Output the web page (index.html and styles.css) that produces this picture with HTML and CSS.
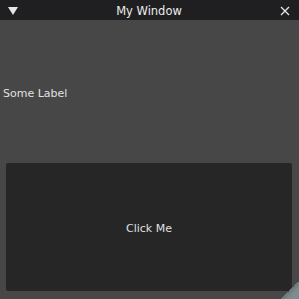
FILE: index.html
```html
<!DOCTYPE html>
<html lang="en">
<head>
    <meta charset="UTF-8">
    <title>My Window</title>
    <link rel="stylesheet" href="styles.css">
</head>
<body>
    <div class="window">
        <div class="titlebar">
            <svg class="collapse" width="10" height="8" viewBox="0 0 10 8">
                <polygon points="0,0 10,0 5,8" fill="#e6e6e6"/>
            </svg>
            <span class="title">My Window</span>
            <svg class="close" width="10" height="10" viewBox="0 0 10 10">
                <path d="M1 1 L9 9 M9 1 L1 9" stroke="#e6e6e6" stroke-width="1.3"/>
            </svg>
        </div>
        <div class="content">
            <div class="label-row">
                <span class="label">Some Label</span>
            </div>
            <button class="button">Click Me</button>
        </div>
        <div class="grip"></div>
    </div>
</body>
</html>
```
FILE: styles.css
```css
body {
    margin: 0;
    padding: 0;
    background-color: #474747;
    font-family: "DejaVu Sans", sans-serif;
    font-size: 11px;
    color: #e0e0e0;
}
.window {
    position: relative;
    width: 299px;
    height: 299px;
    display: flex;
    flex-direction: column;
    background-color: #474747;
    overflow: hidden;
}
.titlebar {
    height: 20px;
    flex-shrink: 0;
    background-color: #1f1f22;
    display: flex;
    align-items: center;
    justify-content: space-between;
    padding: 1px 9px 0 8px;
    box-sizing: border-box;
}
.title {
    flex: 1;
    text-align: center;
    font-size: 11.5px;
    color: #ececec;
}
.content {
    flex: 1;
    display: flex;
    flex-direction: column;
}
.label-row {
    height: 143px;
    display: flex;
    align-items: center;
    padding-left: 3px;
    padding-top: 4px;
    box-sizing: border-box;
}
.button {
    flex: 1;
    margin: 0 7px 8px 6px;
    background-color: #262626;
    border: none;
    border-radius: 2px;
    color: #e0e0e0;
    font-family: "DejaVu Sans", sans-serif;
    font-size: 11px;
    padding: 3px 0 0 0;
}
.grip {
    position: absolute;
    right: 0;
    bottom: 0;
    width: 18px;
    height: 18px;
    background: linear-gradient(135deg, transparent 50%, #6c7778 50%, #7e8c8d 70%);
}
```
